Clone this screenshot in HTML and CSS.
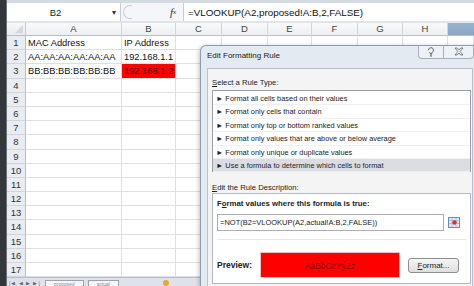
FILE: index.html
```html
<!DOCTYPE html>
<html lang="en">
<head>
    <meta charset="UTF-8">
    <title>Edit Formatting Rule</title>
    <link rel="stylesheet" href="styles.css">
</head>
<body>
    <div class="app">
        <div class="side"></div>
        <div class="excel">
            <div class="ribbon-edge"></div>
            <div class="formula-bar">
                <div class="name-box">
                    <span class="name">B2</span>
                    <span class="drop">&#9662;</span>
                </div>
                <div class="grip"><span></span></div>
                <div class="fx">f<sub>x</sub></div>
                <div class="formula">=VLOOKUP(A2,proposed!A:B,2,FALSE)</div>
            </div>
            <div class="sheet" id="sheet"></div>
            <div class="tabs">
                <span class="nav">|&#9664; &#9664; &#9654; &#9654;|</span>
                <span class="tab">proposed</span>
                <span class="tab">actual</span>
                <span class="new-sheet"></span>
            </div>
        </div>
    </div>

    <div class="dialog">
        <div class="dialog-title">
            <span>Edit Formatting Rule</span>
            <div class="title-btns">
                <span class="tbtn help">
                    <svg width="8" height="10" viewBox="0 0 8 10"><path d="M1.5 3.2a2.5 2.5 0 1 1 4 2l-0.8 0.8v1.2h-1.4v-1.2l-0.8-0.8" fill="none" stroke="#555" stroke-width="0.9"/><path d="M3.2 8.4h1.6M3.4 9.4h1.2" stroke="#555" stroke-width="0.8"/></svg>
                </span>
                <span class="tbtn close">
                    <svg width="10" height="9" viewBox="0 0 10 9"><path d="M1 1l2.2 0 1.8 2 1.8-2 2.2 0-2.8 3.5 2.8 3.5-2.2 0-1.8-2-1.8 2-2.2 0 2.8-3.5z" fill="none" stroke="#666" stroke-width="0.8"/></svg>
                </span>
            </div>
        </div>
        <div class="dialog-body">
            <div class="label"><u>S</u>elect a Rule Type:</div>
            <div class="rule-list">
                <div class="rule">&#9658; Format all cells based on their values</div>
                <div class="rule">&#9658; Format only cells that contain</div>
                <div class="rule">&#9658; Format only top or bottom ranked values</div>
                <div class="rule">&#9658; Format only values that are above or below average</div>
                <div class="rule">&#9658; Format only unique or duplicate values</div>
                <div class="rule selected">&#9658; Use a formula to determine which cells to format</div>
            </div>
            <div class="label second"><u>E</u>dit the Rule Description:</div>
            <div class="desc">
                <div class="desc-title">F<u>o</u>rmat values where this formula is true:</div>
                <div class="input-row">
                    <div class="input">=NOT(B2=VLOOKUP(A2,actual!A:B,2,FALSE))</div>
                    <span class="ref-btn">
                        <svg width="12" height="11" viewBox="0 0 12 11"><rect x="0.5" y="0.5" width="11" height="10" fill="#dce8f6" stroke="#6d8bb3"/><path d="M1 3.5h10M1 6.5h10M4 1v9M8 1v9" stroke="#9fb5d3" stroke-width="0.7"/><circle cx="6.5" cy="5.5" r="2.2" fill="#e0302e"/></svg>
                    </span>
                </div>
                <div class="preview-row">
                    <span class="preview-label">Preview:</span>
                    <div class="preview">AaBbCcYyZz</div>
                    <button class="format-btn"><u>F</u>ormat...</button>
                </div>
            </div>
        </div>
    </div>

    <script>
        // Build the worksheet grid
        const sheet = document.getElementById('sheet');
        const columns = ['', 'A', 'B', 'C', 'D', 'E', 'F', 'G', 'H', ''];
        const data = {
            1: ['MAC Address', 'IP Address'],
            2: ['AA:AA:AA:AA:AA:AA', '192.168.1.1'],
            3: ['BB:BB:BB:BB:BB:BB', '192.168.1.2']
        };

        columns.forEach((name, i) => {
            const cell = document.createElement('div');
            cell.className = i === 0 ? 'corner' : 'col-head';
            if (i === columns.length - 1) cell.classList.add('col-i');
            cell.textContent = name;
            sheet.appendChild(cell);
        });

        for (let r = 1; r <= 17; r++) {
            const head = document.createElement('div');
            head.className = 'row-head';
            head.textContent = r;
            sheet.appendChild(head);
            for (let c = 1; c < columns.length; c++) {
                const cell = document.createElement('div');
                cell.className = 'cell';
                const values = data[r] || [];
                if (values[c - 1]) cell.textContent = values[c - 1];
                if (r === 3 && c === 2) cell.classList.add('flagged');
                sheet.appendChild(cell);
            }
        }
    </script>
</body>
</html>
```

FILE: styles.css
```css
body {
    margin: 0;
    padding: 0;
    width: 474px;
    height: 286px;
    overflow: hidden;
    font-family: 'Liberation Sans', Arial, sans-serif;
    background-color: #fff;
}

.app {
    display: flex;
    height: 286px;
}

.side {
    width: 6px;
    flex: none;
    background-color: #33363b;
    border-right: 1px solid #6b7078;
}

.excel {
    flex: 1;
    display: flex;
    flex-direction: column;
    min-width: 0;
}

.ribbon-edge {
    height: 3px;
    background-color: #d4dae2;
}

.formula-bar {
    height: 18px;
    display: flex;
    background-color: #fff;
    border-bottom: 2px solid #e1e5ea;
}

.name-box {
    width: 113px;
    flex: none;
    display: flex;
    align-items: center;
    border-right: 1px solid #c6ccd4;
    font-size: 9.5px;
    color: #222;
}

.name {
    flex: 1;
    text-align: center;
    padding-right: 8px;
}

.drop {
    font-size: 8px;
    color: #333;
    padding-right: 4px;
}

.grip {
    width: 49px;
    flex: none;
    display: flex;
    align-items: center;
    background-color: #f4f6f9;
}

.grip span {
    width: 8px;
    height: 12px;
    margin-left: 2px;
    border: 1px solid #c9ced5;
    border-right: none;
    border-radius: 8px 0 0 8px;
}

.fx {
    width: 13px;
    flex: none;
    display: flex;
    align-items: center;
    font-family: 'Liberation Serif', serif;
    font-style: italic;
    font-size: 11px;
    color: #333;
    background-color: #f4f6f9;
    border-right: 1px solid #c6ccd4;
}

.fx sub {
    font-size: 7px;
}

.formula {
    flex: 1;
    min-width: 0;
    display: flex;
    align-items: center;
    padding-left: 4px;
    font-size: 9.8px;
    color: #111;
    white-space: nowrap;
}

.sheet {
    display: grid;
    grid-template-columns: 19px 96px 54px 46px 46px 44px 46px 45px 45px 1fr;
    grid-template-rows: 13px repeat(17, 14.2px);
}

.sheet > div {
    box-sizing: border-box;
    white-space: nowrap;
    overflow: hidden;
}

.corner {
    background: linear-gradient(#f7f8fa, #e8ebef);
    border-right: 1px solid #c5cad1;
    border-bottom: 1px solid #b8bec6;
    position: relative;
}

.corner::after {
    content: '';
    position: absolute;
    right: 2px;
    bottom: 2px;
    border-left: 8px solid transparent;
    border-bottom: 8px solid #d4d8de;
}

.col-head {
    background: linear-gradient(#f9fafb, #eceef1);
    border-right: 1px solid #d2d6dc;
    border-bottom: 1px solid #b8bec6;
    font-size: 9.5px;
    line-height: 12px;
    text-align: center;
    color: #444;
}

.col-i {
    background: linear-gradient(#9bb4cf, #8aa6c4);
    border-right: none;
}

.row-head {
    background-color: #e9ecf0;
    border-right: 1px solid #b8bec6;
    border-bottom: 1px solid #d2d6dc;
    font-size: 9.5px;
    line-height: 14px;
    text-align: center;
    color: #333;
}

.cell {
    border-right: 1px solid #dcdfe3;
    border-bottom: 1px solid #dcdfe3;
    font-size: 9.3px;
    line-height: 14px;
    padding-left: 2px;
    color: #111;
}

.cell.flagged {
    background-color: #ff0000;
    color: #4a0000;
}

.tabs {
    flex: 1;
    display: flex;
    align-items: flex-start;
    gap: 4px;
    padding: 2px 0 0 2px;
    background-color: #dfe3e9;
    border-top: 1px solid #b8bec6;
    font-size: 5px;
    line-height: 6px;
    color: #555;
    overflow: hidden;
}

.nav {
    letter-spacing: 1px;
    color: #667;
}

.tab {
    padding: 0 8px;
    border: 1px solid #9aa3ae;
    border-bottom: none;
    background-color: #f4f6f8;
    color: #8a9099;
}

.new-sheet {
    width: 6px;
    height: 6px;
    margin-left: 40px;
    border-radius: 50%;
    background-color: #e4a73a;
}

.dialog {
    position: absolute;
    left: 200px;
    top: 45px;
    width: 278px;
    height: 240px;
    overflow: hidden;
    background-color: #e4eaf1;
    border: 1px solid #8f9cab;
    border-bottom: none;
    border-radius: 6px 6px 0 0;
    box-shadow: -1px 1px 4px rgba(0, 0, 0, 0.25);
}

.dialog-title {
    position: relative;
    height: 22px;
    padding-left: 6px;
    font-size: 8px;
    line-height: 20px;
    color: #222;
}

.title-btns {
    position: absolute;
    top: -1px;
    right: 5px;
    display: flex;
    height: 13px;
    border: 1px solid #a7b1bd;
    border-top: none;
    border-radius: 0 0 4px 4px;
    background-color: #eef2f6;
    overflow: hidden;
}

.tbtn {
    display: flex;
    align-items: center;
    justify-content: center;
}

.help {
    width: 24px;
    border-right: 1px solid #a7b1bd;
}

.close {
    width: 29px;
}

.dialog-body {
    margin: 0 6px;
    padding: 9px 0 0 4px;
    height: 230px;
    background-color: #f4f4f5;
    border: 1px solid #b9c3cf;
    border-bottom: none;
    font-size: 7.7px;
    color: #222;
}

.label {
    height: 10px;
    line-height: 10px;
    margin-bottom: 2px;
}

.label.second {
    margin-top: 11px;
    margin-bottom: 0;
}

.rule-list {
    height: 82px;
    padding-top: 1px;
    margin-right: 1px;
    background-color: #fff;
    border: 1px solid #9aa0a8;
    box-sizing: border-box;
    font-size: 7.4px;
}

.rule {
    height: 13.4px;
    line-height: 13.4px;
    padding-left: 3px;
    white-space: nowrap;
    border-bottom: 1px solid #f0f0f0;
    box-sizing: border-box;
}

.selected {
    background-color: #dcdde2;
}

.desc {
    margin-right: 1px;
    height: 91px;
    padding: 5px 0 0 4px;
    background-color: #fff;
    border: 1px solid #b4b9c0;
    box-sizing: border-box;
}

.desc-title {
    font-weight: bold;
    font-size: 7.8px;
    line-height: 10px;
}

.input-row {
    display: flex;
    align-items: center;
    gap: 2px;
    margin-top: 5px;
    margin-right: 4px;
    padding-bottom: 8px;
    border-bottom: 1px solid #e4e6ea;
}

.input {
    width: 227px;
    height: 17px;
    line-height: 15px;
    padding-left: 2px;
    box-sizing: border-box;
    border: 1px solid #abadb3;
    background-color: #fff;
    font-size: 7.5px;
    white-space: nowrap;
}

.ref-btn {
    width: 15px;
    height: 16px;
    display: flex;
    align-items: center;
    justify-content: center;
}

.preview-row {
    display: flex;
    align-items: center;
    margin-top: 12px;
}

.preview-label {
    width: 43px;
    font-weight: bold;
    font-size: 8.5px;
}

.preview {
    width: 140px;
    height: 26px;
    line-height: 26px;
    text-align: center;
    background-color: #ff0000;
    border: 1px solid #f2c0c0;
    box-sizing: border-box;
    color: #8c0a0a;
    font-size: 8.5px;
}

.format-btn {
    margin-left: 8px;
    width: 51px;
    height: 15px;
    padding: 0;
    font-family: 'Liberation Sans', Arial, sans-serif;
    font-size: 8px;
    color: #222;
    background: linear-gradient(#f6f6f6, #dedede);
    border: 1px solid #8d8d8d;
    border-radius: 3px;
}
```
